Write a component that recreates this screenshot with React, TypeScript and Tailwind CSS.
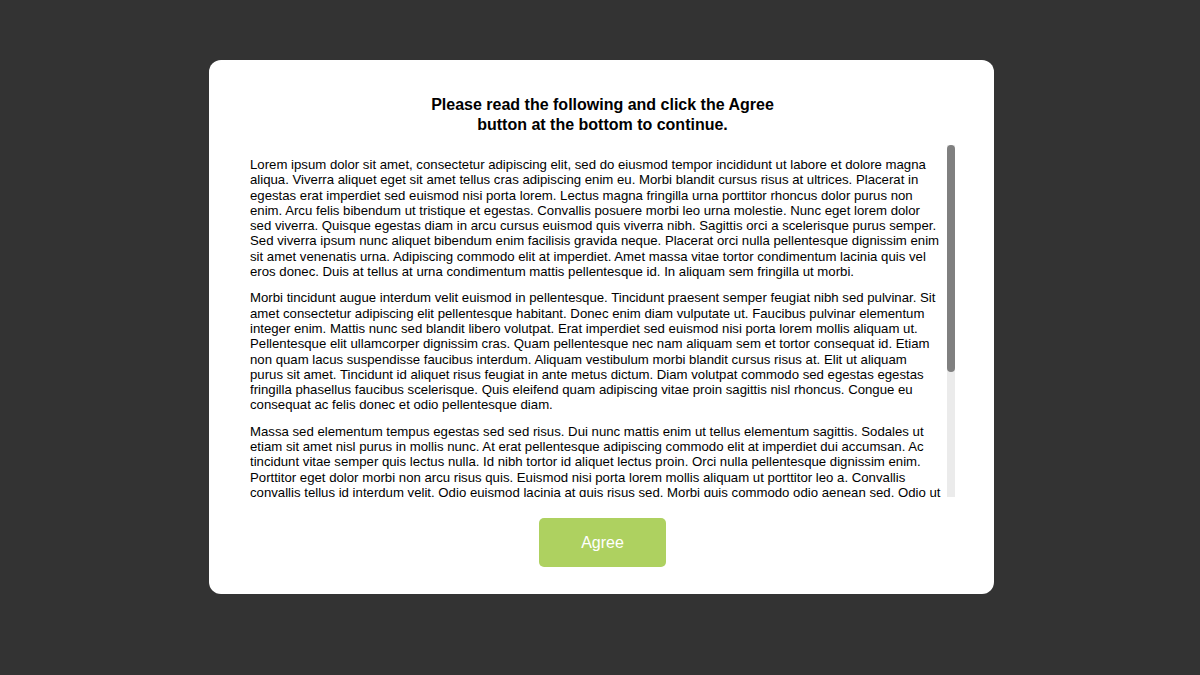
export default function App() {
  const paragraphs = [
    "Lorem ipsum dolor sit amet, consectetur adipiscing elit, sed do eiusmod tempor incididunt ut labore et dolore magna aliqua. Viverra aliquet eget sit amet tellus cras adipiscing enim eu. Morbi blandit cursus risus at ultrices. Placerat in egestas erat imperdiet sed euismod nisi porta lorem. Lectus magna fringilla urna porttitor rhoncus dolor purus non enim. Arcu felis bibendum ut tristique et egestas. Convallis posuere morbi leo urna molestie. Nunc eget lorem dolor sed viverra. Quisque egestas diam in arcu cursus euismod quis viverra nibh. Sagittis orci a scelerisque purus semper. Sed viverra ipsum nunc aliquet bibendum enim facilisis gravida neque. Placerat orci nulla pellentesque dignissim enim sit amet venenatis urna. Adipiscing commodo elit at imperdiet. Amet massa vitae tortor condimentum lacinia quis vel eros donec. Duis at tellus at urna condimentum mattis pellentesque id. In aliquam sem fringilla ut morbi.",
    "Morbi tincidunt augue interdum velit euismod in pellentesque. Tincidunt praesent semper feugiat nibh sed pulvinar. Sit amet consectetur adipiscing elit pellentesque habitant. Donec enim diam vulputate ut. Faucibus pulvinar elementum integer enim. Mattis nunc sed blandit libero volutpat. Erat imperdiet sed euismod nisi porta lorem mollis aliquam ut. Pellentesque elit ullamcorper dignissim cras. Quam pellentesque nec nam aliquam sem et tortor consequat id. Etiam non quam lacus suspendisse faucibus interdum. Aliquam vestibulum morbi blandit cursus risus at. Elit ut aliquam purus sit amet. Tincidunt id aliquet risus feugiat in ante metus dictum. Diam volutpat commodo sed egestas egestas fringilla phasellus faucibus scelerisque. Quis eleifend quam adipiscing vitae proin sagittis nisl rhoncus. Congue eu consequat ac felis donec et odio pellentesque diam.",
    "Massa sed elementum tempus egestas sed sed risus. Dui nunc mattis enim ut tellus elementum sagittis. Sodales ut etiam sit amet nisl purus in mollis nunc. At erat pellentesque adipiscing commodo elit at imperdiet dui accumsan. Ac tincidunt vitae semper quis lectus nulla. Id nibh tortor id aliquet lectus proin. Orci nulla pellentesque dignissim enim. Porttitor eget dolor morbi non arcu risus quis. Euismod nisi porta lorem mollis aliquam ut porttitor leo a. Convallis convallis tellus id interdum velit. Odio euismod lacinia at quis risus sed. Morbi quis commodo odio aenean sed. Odio ut enim blandit volutpat maecenas volutpat blandit aliquam. Egestas integer eget aliquet nibh praesent tristique magna sit. Nunc sed id semper risus in hendrerit gravida rutrum. Tellus molestie nunc non blandit massa enim nec dui nunc.",
    "Vitae congue mauris rhoncus aenean vel elit scelerisque mauris. Faucibus a pellentesque sit amet porttitor eget dolor morbi. Risus viverra adipiscing at in tellus integer feugiat scelerisque. Nibh tortor id aliquet lectus proin nibh nisl condimentum. Ultricies mi eget mauris pharetra et ultrices neque ornare. Arcu dictum varius duis at consectetur lorem donec massa. Sed risus ultricies tristique nulla aliquet enim tortor at auctor. Pretium fusce id velit ut tortor pretium viverra suspendisse. Quam adipiscing vitae proin sagittis nisl rhoncus mattis rhoncus urna. Amet nisl suscipit adipiscing bibendum est ultricies integer quis auctor. Lacus vel facilisis volutpat est velit egestas dui id ornare.",
  ];

  return (
    <div className="min-h-screen bg-[#333333] pt-[60px] font-['Liberation_Sans',Arial,sans-serif]">
      <div className="ml-[209px] w-[785px] rounded-[12px] bg-white pl-[41px] pr-[39px] pt-[35px] pb-[27px]">
        <h1 className="text-center text-[16px] font-bold leading-[20px] text-black">
          Please read the following and click the Agree
          <br />
          button at the bottom to continue.
        </h1>

        <div className="mt-[10px] flex h-[352px] gap-[5px]">
          <div className="w-[692px] overflow-y-auto pt-[12px] pb-[12px] text-[13.2px] leading-[15.3px] text-black [scrollbar-width:none] [&::-webkit-scrollbar]:hidden">
            {paragraphs.map((p, i) => (
              <p key={i} className={i > 0 ? "mt-[11px]" : ""}>
                {p}
              </p>
            ))}
          </div>
          <div className="flex w-[8px] flex-col bg-[#ebebeb]">
            <div className="h-[227px] rounded-full bg-[#808080]" />
          </div>
        </div>

        <div className="mt-[21px] flex justify-center">
          <button className="h-[49px] w-[127px] rounded-[5px] bg-[#aed160] text-[16px] text-white">
            Agree
          </button>
        </div>
      </div>
    </div>
  );
}
